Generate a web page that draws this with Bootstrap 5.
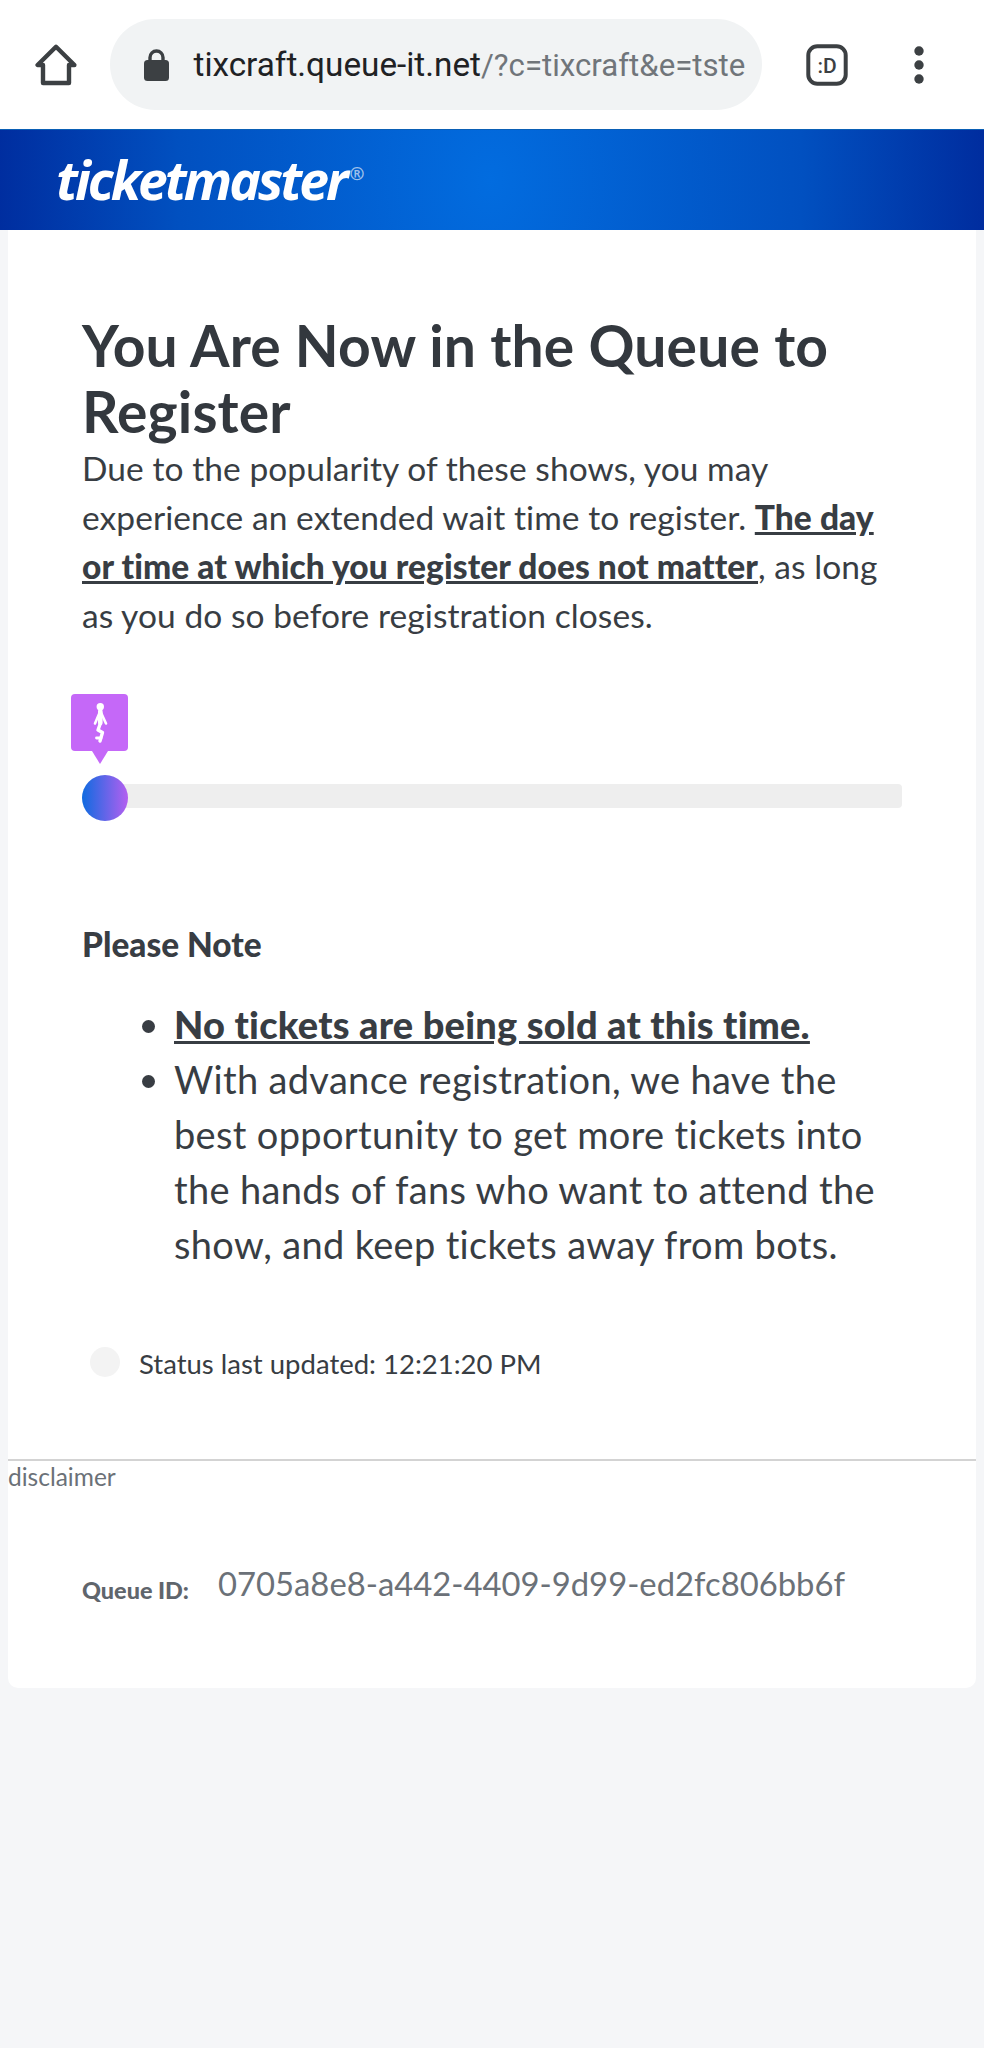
<!DOCTYPE html>
<html lang="en"><head><meta charset="utf-8"><title>Queue</title>
<link href="https://cdn.jsdelivr.net/npm/bootstrap@5.3.0/dist/css/bootstrap.min.css" rel="stylesheet">
<style>
html,body{margin:0;background:#f5f6f8;}
body{font-family:Lato,"Liberation Sans",sans-serif;color:#383d43;width:984px;height:2048px;overflow:hidden;font-variant-ligatures:none;}
.tb{height:129px;background:#fff;padding:0 40px 0 35px;}
.tb-home{width:42px;height:42px;flex:none;}
.urlbar{margin-left:33px;width:652px;height:91px;background:#f1f3f4;border-radius:46px;padding-left:34px;flex:none;font-family:Roboto,sans-serif;font-size:33.3px;color:#202124;white-space:nowrap;}
.urlbar .path{color:#70757a;font-size:31.2px;}
.url-txt{margin-left:24.5px;}
.tab-ic{margin-left:44px;flex:none;}
.dots{margin-left:65px;flex:none;}
.brand{height:101px;background:radial-gradient(ellipse 520px 700px at 490px 50%,#026cdf 0%,#0150c0 60%,#00289a 100%);border-top:1px solid #0a5fb5;padding-left:56px;}
.logo{font-family:"Open Sans",sans-serif;font-style:italic;font-weight:700;font-size:53.5px;color:#fff;letter-spacing:-3px;line-height:1;}
.logo sup{font-size:18px;font-style:normal;font-weight:700;top:-1.1em;color:#9fc0ea;margin-left:4px;letter-spacing:0;}
.sheet{margin:0 8px;height:1458px;background:#fff;border-radius:0 0 10px 10px;overflow:hidden;}
.inner{padding:0 74px;}
.ttl{font-size:57px;font-weight:700;line-height:66px;margin:0;padding-top:82px;color:#33383e;letter-spacing:.16px;}
.intro{font-size:33.5px;line-height:49px;margin:0;padding-top:0;letter-spacing:.07px;}
.intro b{text-decoration:underline;font-weight:900;}
.track-wrap{height:113px;margin-top:54px;}
.walker{left:-11px;top:0;width:57px;height:57px;background:#c568f8;border-radius:4px;}
.walker::after{content:"";position:absolute;left:20.5px;top:57px;border-style:solid;border-width:13px 8px 0;border-color:#c568f8 transparent transparent;}
.dotball{left:0;top:81px;width:46px;height:46px;border-radius:50%;background:linear-gradient(90deg,#0f6be0,#b45ff0);}
.trackbar{position:absolute;left:40px;right:0;top:90px;height:24px;background:#eee;border-radius:0 4px 4px 0;}
.note-h{font-size:33.4px;font-weight:900;margin:0;padding-top:117px;line-height:40px;}
.notes{font-size:38px;line-height:55px;margin:0;padding:33px 0 0 92px;letter-spacing:.33px;}
.notes b{text-decoration:underline;font-weight:900;letter-spacing:.23px;}
.stat{font-size:27.5px;padding:72px 0 0 8px;line-height:40px;height:112px;}
.spin{width:30px;height:30px;border-radius:50%;background:#f3f3f3;margin-right:19px;margin-bottom:4px;}
.rule{margin:0;border:0;border-top:2px solid #d3d3d3;opacity:1;margin-top:75px;}
.discl{font-size:24.5px;line-height:32px;color:#6b7178;}
.qid{padding:69px 74px 0;}
.qid b{font-size:23.4px;font-weight:900;color:#5f656c;margin-right:29px;}
.qid span{font-size:32.8px;color:#6b7178;position:relative;top:-3px;}
</style></head>
<body>
<div class="tb d-flex align-items-center">
 <svg class="tb-home" viewBox="0 0 42 42" fill="none" stroke="#3c4043" stroke-width="4.4" stroke-linejoin="round"><path d="M21 2.8 2.6 21H8V39H34V21H39.4Z"/></svg>
 <div class="urlbar d-flex align-items-center">
  <svg width="25" height="32" viewBox="0 0 25 32" class="flex-none"><path d="M6 13V8.5a6.5 6.5 0 0 1 13 0V13" fill="none" stroke="#3c4043" stroke-width="3.4"/><rect x="0" y="11" width="25" height="21" rx="3.5" fill="#3c4043"/></svg>
  <div class="url-txt">tixcraft.queue-it.net<span class="path">/?c=tixcraft&amp;e=tste</span></div>
 </div>
 <svg class="tab-ic" width="42" height="42" viewBox="0 0 42 42"><rect x="2.3" y="2.3" width="37.4" height="37.4" rx="9" fill="none" stroke="#3c4043" stroke-width="4"/><text x="21" y="28.5" text-anchor="middle" font-family="Roboto,sans-serif" font-size="21" font-weight="500" fill="#3c4043">:D</text></svg>
 <svg class="dots" width="12" height="40" viewBox="0 0 12 40"><circle cx="6" cy="6" r="4.7" fill="#3c4043"/><circle cx="6" cy="20" r="4.7" fill="#3c4043"/><circle cx="6" cy="34" r="4.7" fill="#3c4043"/></svg>
</div>
<div class="brand d-flex align-items-center"><div class="logo">ticketmaster<sup>®</sup></div></div>
<div class="sheet">
 <div class="inner">
  <h1 class="ttl">You Are Now in the Queue to Register</h1>
  <p class="intro">Due to the popularity of these shows, you may experience an extended wait time to register. <b>The day or time at which you register does not matter</b>, as long as you do so before registration closes.</p>
  <div class="track-wrap position-relative">
   <div class="trackbar"></div>
   <div class="walker position-absolute">
    <svg class="d-block" width="57" height="57" viewBox="0 0 57 57" fill="none" stroke="#fff" stroke-linecap="round" stroke-linejoin="round"><circle cx="29.3" cy="12.7" r="3.7" fill="#fff" stroke="none"/><path d="M29.3 17 24 29.5M29.3 17 35 29.5" stroke-width="2.6"/><path d="M29.3 17V29" stroke-width="4.6"/><path d="M29.5 29 27 36 31.5 38.5 29 47" stroke-width="3.4"/><path d="M25.5 44H30" stroke-width="2.8"/></svg>
   </div>
   <div class="dotball position-absolute"></div>
  </div>
  <h2 class="note-h">Please Note</h2>
  <ul class="notes">
   <li><b>No tickets are being sold at this time.</b></li>
   <li>With advance registration, we have the best opportunity to get more tickets into the hands of fans who want to attend the show, and keep tickets away from bots.</li>
  </ul>
  <div class="stat d-flex align-items-center"><span class="spin"></span><span>Status last updated: 12:21:20 PM</span></div>
 </div>
 <hr class="rule">
 <div class="discl">disclaimer</div>
 <div class="qid"><b>Queue ID:</b><span>0705a8e8-a442-4409-9d99-ed2fc806bb6f</span></div>
</div>
<script src="https://cdn.jsdelivr.net/npm/bootstrap@5.3.0/dist/js/bootstrap.bundle.min.js"></script>
</body></html>
